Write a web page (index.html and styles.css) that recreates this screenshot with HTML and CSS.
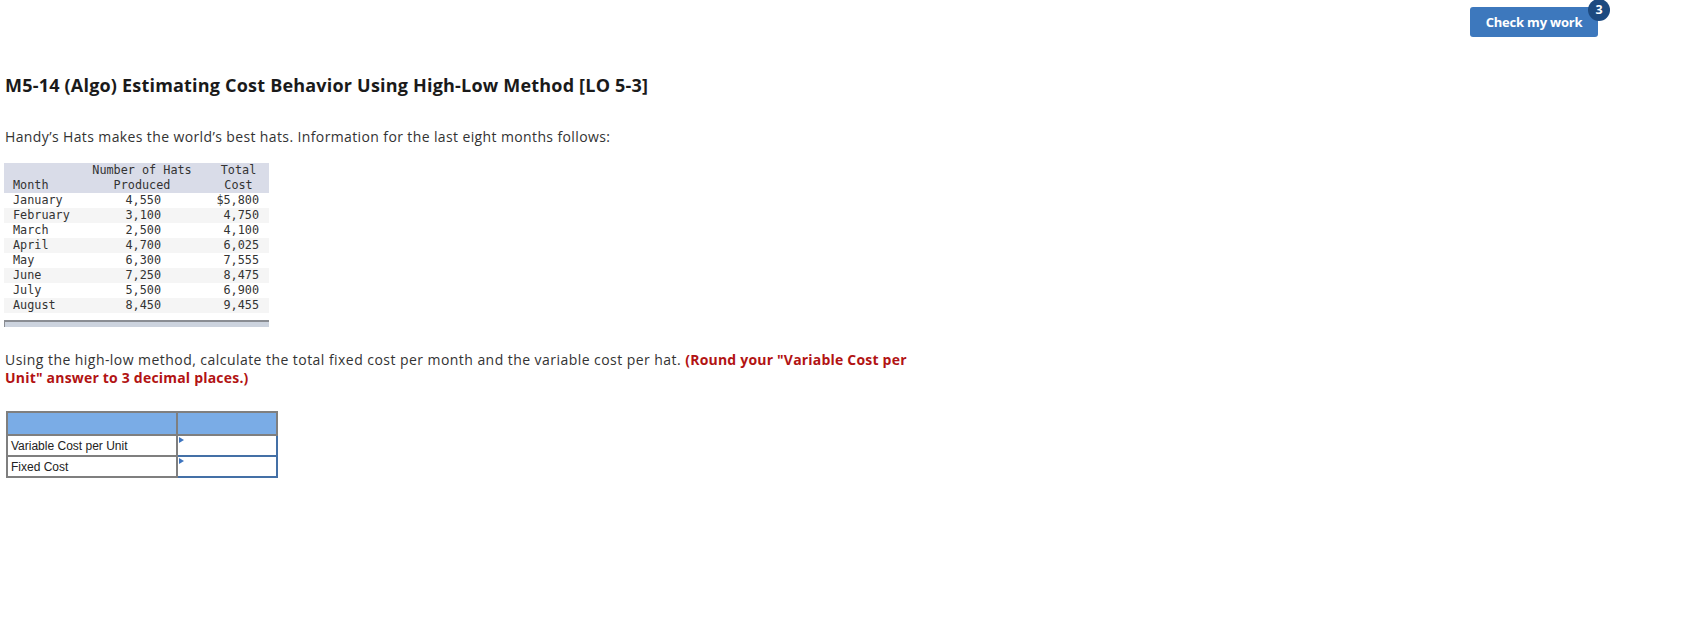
FILE: index.html
```html
<!DOCTYPE html>
<html>
<head>
<meta charset="utf-8">
<link rel="stylesheet" href="styles.css">
</head>
<body>
<div class="topbar">
  <button class="check-btn">Check my work<span class="badge">3</span></button>
</div>
<h1 class="title">M5-14 (Algo) Estimating Cost Behavior Using High-Low Method [LO 5-3]</h1>
<p class="intro">Handy’s Hats makes the world’s best hats. Information for the last eight months follows:</p>
<div class="data">
  <table class="data-table">
    <thead>
      <tr><th class="c1"></th><th class="c2">Number of Hats</th><th class="c3">Total</th></tr>
      <tr><th class="c1 left">Month</th><th class="c2">Produced</th><th class="c3">Cost</th></tr>
    </thead>
    <tbody>
      <tr><td class="c1">January</td><td class="c2">4,550</td><td class="c3">$5,800</td></tr>
      <tr><td class="c1">February</td><td class="c2">3,100</td><td class="c3">4,750</td></tr>
      <tr><td class="c1">March</td><td class="c2">2,500</td><td class="c3">4,100</td></tr>
      <tr><td class="c1">April</td><td class="c2">4,700</td><td class="c3">6,025</td></tr>
      <tr><td class="c1">May</td><td class="c2">6,300</td><td class="c3">7,555</td></tr>
      <tr><td class="c1">June</td><td class="c2">7,250</td><td class="c3">8,475</td></tr>
      <tr><td class="c1">July</td><td class="c2">5,500</td><td class="c3">6,900</td></tr>
      <tr><td class="c1">August</td><td class="c2">8,450</td><td class="c3">9,455</td></tr>
    </tbody>
  </table>
  <div class="data-foot"></div>
</div>
<p class="question">Using the high-low method, calculate the total fixed cost per month and the variable cost per hat. <strong class="hint">(Round your "Variable Cost per Unit" answer to 3 decimal places.)</strong></p>
<table class="answer">
  <tr class="ahead"><td class="alabel"></td><td class="aval"></td></tr>
  <tr><td class="alabel">Variable Cost per Unit</td><td class="ainput"><span class="flag"></span></td></tr>
  <tr><td class="alabel">Fixed Cost</td><td class="ainput"><span class="flag"></span></td></tr>
</table>
</body>
</html>
```
FILE: styles.css
```css
* { box-sizing: border-box; }
body {
  margin: 0;
  padding: 0 5px;
  font-family: "Open Sans", "Lato", sans-serif;
  color: #222;
  background: #fff;
}
.topbar {
  display: flex;
  justify-content: flex-end;
  padding: 7px 79px 0 0;
}
.check-btn {
  position: relative;
  width: 128px;
  height: 30px;
  border: 0;
  border-radius: 3px;
  background: #3d78bd;
  color: #fff;
  font-family: "Open Sans", sans-serif;
  font-weight: 700;
  font-size: 13px;
  letter-spacing: -0.2px;
  padding: 0;
}
.badge {
  position: absolute;
  right: -12px;
  top: -8px;
  width: 22px;
  height: 22px;
  border-radius: 50%;
  background: #1d4a80;
  color: #fff;
  font-size: 12.5px;
  font-weight: 700;
  line-height: 22px;
  text-align: center;
}
.title {
  margin: 37px 0 0;
  font-size: 18px;
  line-height: 22px;
  font-weight: 700;
  letter-spacing: 0.2px;
  color: #1a1a1a;
}
.intro {
  margin: 32px 0 0;
  font-size: 14px;
  line-height: 18px;
  letter-spacing: 0.38px;
  color: #333;
}
.data {
  margin-top: 17px;
  width: 265px;
  margin-left: -1px;
}
.data-table {
  border-collapse: collapse;
  width: 265px;
  font-family: "DejaVu Sans Mono", "Liberation Mono", monospace;
  font-size: 11.8px;
  color: #333;
}
.data-table th, .data-table td {
  padding: 0;
  height: 15px;
  line-height: 15px;
  font-weight: 400;
  white-space: nowrap;
}
.data-table thead tr { background: #d9dce8; }
.data-table tbody tr:nth-child(even) { background: #f5f5f5; }
.data-table .c1 { text-align: left; padding-left: 9px; width: 82px; }
.data-table .c2 { text-align: center; width: 112px; }
.data-table td.c2 { text-align: right; padding-right: 37px; }
.data-table .c3 { text-align: right; padding-right: 10px; }
.data-table th.c3 { text-align: center; padding-left: 10px; padding-right: 0; }
.data-foot {
  margin-top: 7px;
  height: 7px;
  background: #ccd3de;
  border-top: 2px solid #8a8d93;
  border-left: 1px solid #8a8d93;
}
.question {
  margin: 24px 0 0;
  font-size: 14px;
  line-height: 18px;
  letter-spacing: 0.45px;
  color: #333;
  max-width: 912px;
}
.hint { color: #b21313; font-weight: 700; letter-spacing: 0.2px; }
.answer {
  margin-top: 24px;
  border-collapse: collapse;
  font-family: "Liberation Sans", Arial, sans-serif;
  font-size: 12px;
  color: #222;
  margin-left: 1px;
}
.answer td {
  border: 2px solid #7f7f7f;
  padding: 0 3px;
  height: 21px;
}
.ahead td {
  background: #7aace6;
  height: 23px;
}
.alabel { width: 170px; }
.aval { width: 100px; }
.answer td.ainput {
  border: 2px solid #4470a6;
  position: relative;
  background: #fff;
}
.flag {
  position: absolute;
  left: 1px;
  top: 1px;
  width: 0;
  height: 0;
  border-top: 3px solid transparent;
  border-bottom: 3px solid transparent;
  border-left: 5px solid #3e75c0;
}
```
